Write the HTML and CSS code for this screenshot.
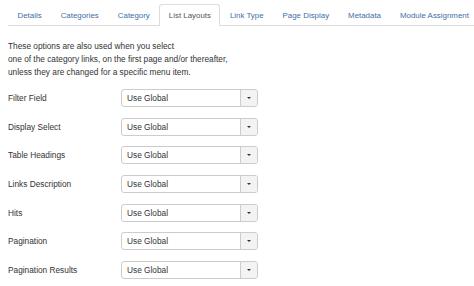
FILE: index.html
```html
<!DOCTYPE html>
<html>
<head>
<meta charset="utf-8">
<link rel="stylesheet" href="styles.css">
</head>
<body>
<div class="page">
  <ul class="tabs">
    <li class="tab">Details</li>
    <li class="tab">Categories</li>
    <li class="tab">Category</li>
    <li class="tab active">List Layouts</li>
    <li class="tab">Link Type</li>
    <li class="tab">Page Display</li>
    <li class="tab">Metadata</li>
    <li class="tab">Module Assignment</li>
  </ul>
  <p class="intro">These options are also used when you select<br>one of the category links, on the first page and/or thereafter,<br>unless they are changed for a specific menu item.</p>
  <div class="form">
    <div class="row"><span class="label">Filter Field</span><div class="select"><span class="value">Use Global</span><span class="btn"><span class="caret"></span></span></div></div>
    <div class="row"><span class="label">Display Select</span><div class="select"><span class="value">Use Global</span><span class="btn"><span class="caret"></span></span></div></div>
    <div class="row"><span class="label">Table Headings</span><div class="select"><span class="value">Use Global</span><span class="btn"><span class="caret"></span></span></div></div>
    <div class="row"><span class="label">Links Description</span><div class="select"><span class="value">Use Global</span><span class="btn"><span class="caret"></span></span></div></div>
    <div class="row"><span class="label">Hits</span><div class="select"><span class="value">Use Global</span><span class="btn"><span class="caret"></span></span></div></div>
    <div class="row"><span class="label">Pagination</span><div class="select"><span class="value">Use Global</span><span class="btn"><span class="caret"></span></span></div></div>
    <div class="row"><span class="label">Pagination Results</span><div class="select"><span class="value">Use Global</span><span class="btn"><span class="caret"></span></span></div></div>
  </div>
</div>
</body>
</html>
```
FILE: styles.css
```css
html, body {
  margin: 0;
  padding: 0;
  background: #ffffff;
}
body {
  font-family: "Liberation Sans", Arial, sans-serif;
  color: #333333;
}
.page {
  padding: 4px 0 0 8px;
}
.tabs {
  list-style: none;
  margin: 0;
  padding: 0;
  display: flex;
  border-bottom: 1px solid #dddddd;
  height: 21px;
}
.tab {
  flex-shrink: 0;
  white-space: nowrap;
  font-size: 7.9px;
  color: #3d6fa6;
  padding: 0 8.5px;
  height: 21px;
  line-height: 21px;
  box-sizing: border-box;
  border: 1px solid transparent;
  border-bottom: none;
}
.tab.active {
  color: #555555;
  background: #ffffff;
  border-color: #dddddd;
  border-radius: 3px 3px 0 0;
  height: 22px;
  margin-bottom: -1px;
}
.intro {
  margin: 14px 0 0 0;
  font-size: 8.3px;
  line-height: 13px;
}
.form {
  margin-top: 10px;
  display: flex;
  flex-direction: column;
  gap: 10.67px;
}
.row {
  display: flex;
  align-items: center;
  height: 18px;
}
.label {
  width: 113px;
  font-size: 8.3px;
}
.select {
  display: flex;
  width: 137px;
  height: 18px;
  box-sizing: border-box;
  border: 1px solid #cccccc;
  border-radius: 3px;
  overflow: hidden;
}
.value {
  flex: 1;
  font-size: 8.3px;
  line-height: 16px;
  padding-left: 5px;
}
.btn {
  width: 16px;
  border-left: 1px solid #cccccc;
  background: #f3f3f3;
  display: flex;
  align-items: center;
  justify-content: center;
}
.caret {
  width: 0;
  height: 0;
  border-left: 2px solid transparent;
  border-right: 2px solid transparent;
  border-top: 2px solid #333333;
}
```
